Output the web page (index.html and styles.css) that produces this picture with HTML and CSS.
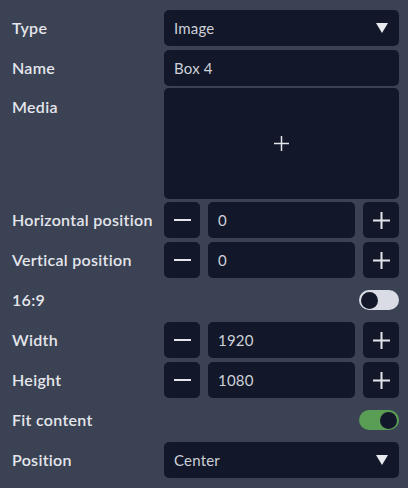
FILE: index.html
```html
<!DOCTYPE html>
<html>
<head>
<meta charset="utf-8">
<link rel="stylesheet" href="styles.css">
</head>
<body>
<div class="panel">
  <div class="row">
    <div class="label">Type</div>
    <div class="field select"><span>Image</span>
      <svg class="caret" width="12" height="10" viewBox="0 0 12 10"><polygon points="0,0 12,0 6,10" /></svg>
    </div>
  </div>
  <div class="row">
    <div class="label">Name</div>
    <div class="field"><span>Box 4</span></div>
  </div>
  <div class="row media-row">
    <div class="label">Media</div>
    <div class="media">
      <svg width="15" height="15" viewBox="0 0 15 15"><rect x="6.75" y="0" width="1.5" height="15"/><rect x="0" y="6.75" width="15" height="1.5"/></svg>
    </div>
  </div>
  <div class="row">
    <div class="label">Horizontal position</div>
    <div class="stepper">
      <div class="btn"><svg width="17" height="2" viewBox="0 0 17 2"><rect width="17" height="2"/></svg></div>
      <div class="field num"><span>0</span></div>
      <div class="btn"><svg width="17" height="17" viewBox="0 0 17 17"><rect x="7.5" width="2" height="17"/><rect y="7.5" width="17" height="2"/></svg></div>
    </div>
  </div>
  <div class="row">
    <div class="label">Vertical position</div>
    <div class="stepper">
      <div class="btn"><svg width="17" height="2" viewBox="0 0 17 2"><rect width="17" height="2"/></svg></div>
      <div class="field num"><span>0</span></div>
      <div class="btn"><svg width="17" height="17" viewBox="0 0 17 17"><rect x="7.5" width="2" height="17"/><rect y="7.5" width="17" height="2"/></svg></div>
    </div>
  </div>
  <div class="row">
    <div class="label">16:9</div>
    <div class="toggle-wrap"><div class="toggle off"><div class="knob"></div></div></div>
  </div>
  <div class="row">
    <div class="label">Width</div>
    <div class="stepper">
      <div class="btn"><svg width="17" height="2" viewBox="0 0 17 2"><rect width="17" height="2"/></svg></div>
      <div class="field num"><span>1920</span></div>
      <div class="btn"><svg width="17" height="17" viewBox="0 0 17 17"><rect x="7.5" width="2" height="17"/><rect y="7.5" width="17" height="2"/></svg></div>
    </div>
  </div>
  <div class="row">
    <div class="label">Height</div>
    <div class="stepper">
      <div class="btn"><svg width="17" height="2" viewBox="0 0 17 2"><rect width="17" height="2"/></svg></div>
      <div class="field num"><span>1080</span></div>
      <div class="btn"><svg width="17" height="17" viewBox="0 0 17 17"><rect x="7.5" width="2" height="17"/><rect y="7.5" width="17" height="2"/></svg></div>
    </div>
  </div>
  <div class="row">
    <div class="label">Fit content</div>
    <div class="toggle-wrap"><div class="toggle on"><div class="knob"></div></div></div>
  </div>
  <div class="row">
    <div class="label">Position</div>
    <div class="field select"><span>Center</span>
      <svg class="caret" width="12" height="10" viewBox="0 0 12 10"><polygon points="0,0 12,0 6,10" /></svg>
    </div>
  </div>
</div>
</body>
</html>
```
FILE: styles.css
```css
html, body {
  margin: 0;
  padding: 0;
  background: #3a4254;
}
body {
  font-family: Lato, "Noto Sans", sans-serif;
  width: 408px;
  height: 488px;
  overflow: hidden;
}
.panel {
  padding: 8px 9px 8px 12px;
  display: flex;
  flex-direction: column;
}
.row {
  display: grid;
  grid-template-columns: 152px 1fr;
  align-items: center;
  height: 40px;
}
.label {
  color: #e4e6eb;
  font-size: 16px;
  font-weight: 600;
  letter-spacing: 0.3px;
  white-space: nowrap;
  margin-top: -2px;
}
.field {
  height: 36px;
  background: #12172a;
  border-radius: 5px;
  display: flex;
  align-items: center;
  padding: 0 10px;
  color: #cdd0d7;
  font-size: 15px;
  letter-spacing: 0.2px;
  box-sizing: border-box;
}
.select {
  justify-content: space-between;
  padding-right: 11px;
}
.caret polygon { fill: #e8eaef; }
.media-row {
  height: 112px;
  align-items: start;
}
.media-row .label { padding-top: 11px; }
.media {
  height: 111px;
  background: #12172a;
  border-radius: 5px;
  display: flex;
  align-items: center;
  justify-content: center;
}
.media svg rect { fill: #e4e6eb; }
.stepper {
  display: grid;
  grid-template-columns: 36px 1fr 36px;
  gap: 8px;
}
.btn {
  height: 36px;
  background: #12172a;
  border-radius: 5px;
  display: flex;
  align-items: center;
  justify-content: center;
}
.btn svg rect { fill: #e4e6eb; }
.num { padding-left: 10px; }
.toggle-wrap {
  display: flex;
  justify-content: flex-end;
}
.toggle {
  width: 40px;
  height: 20px;
  border-radius: 10px;
  display: flex;
  align-items: center;
  padding: 0 2px;
  box-sizing: border-box;
}
.toggle.off { background: #d9dce5; justify-content: flex-start; }
.toggle.on { background: #5a9e55; justify-content: flex-end; }
.knob {
  width: 17px;
  height: 17px;
  border-radius: 50%;
  background: #12172a;
}
```
